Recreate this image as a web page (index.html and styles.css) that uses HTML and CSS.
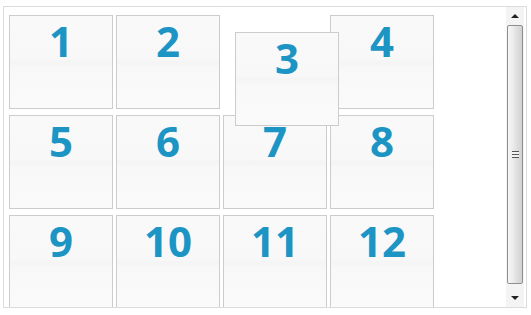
FILE: index.html
```html
<!DOCTYPE html>
<html>
<head>
<meta charset="utf-8">
<link rel="stylesheet" href="styles.css">
</head>
<body>
<div class="frame">
  <div class="content">
    <ul class="sortable">
      <li class="tile">1</li>
      <li class="tile">2</li>
      <li class="placeholder"></li>
      <li class="tile">4</li>
      <li class="tile">5</li>
      <li class="tile">6</li>
      <li class="tile">7</li>
      <li class="tile">8</li>
      <li class="tile">9</li>
      <li class="tile">10</li>
      <li class="tile">11</li>
      <li class="tile">12</li>
    </ul>
    <div class="tile dragging">3</div>
  </div>
  <div class="scrollbar">
    <div class="sb-btn"><span class="arrow-up"></span></div>
    <div class="sb-track">
      <div class="sb-thumb"><span class="grip"></span></div>
    </div>
    <div class="sb-btn"><span class="arrow-down"></span></div>
  </div>
</div>
</body>
</html>
```
FILE: styles.css
```css
html, body {
  margin: 0;
  padding: 0;
  background: #fff;
}
.frame {
  margin: 6px 0 0 3px;
  width: 522px;
  height: 300px;
  border: 1px solid #dcdcdc;
  display: flex;
  overflow: hidden;
}
.content {
  flex: 1;
  position: relative;
  overflow: hidden;
  padding: 8px 0 0 5px;
}
.sortable {
  list-style: none;
  margin: 0;
  padding: 0;
  display: grid;
  grid-template-columns: repeat(4, 104px);
  grid-auto-rows: 94px;
  column-gap: 3px;
  row-gap: 6px;
}
.tile {
  box-sizing: border-box;
  width: 104px;
  height: 94px;
  border: 1px solid #cccccc;
  background: linear-gradient(to bottom, #f9f9f9 0%, #f8f8f8 47%, #f4f4f4 50%, #f8f8f8 56%, #fafafa 100%);
  color: #1c94c4;
  font-family: "Open Sans", "DejaVu Sans", sans-serif;
  font-weight: bold;
  font-size: 42px;
  line-height: 46px;
  text-align: center;
  padding-top: 2px;
}
.placeholder {
  width: 104px;
  height: 94px;
}
.dragging {
  position: absolute;
  left: 231px;
  top: 25px;
  z-index: 5;
}
.scrollbar {
  width: 18px;
  margin-right: 2px;
  background: #f4f4f4;
  display: flex;
  flex-direction: column;
}
.sb-btn {
  height: 18px;
  display: flex;
  align-items: center;
  justify-content: center;
}
.arrow-up {
  width: 0;
  height: 0;
  border-left: 4px solid transparent;
  border-right: 4px solid transparent;
  border-bottom: 4px solid #222;
}
.arrow-down {
  width: 0;
  height: 0;
  border-left: 4px solid transparent;
  border-right: 4px solid transparent;
  border-top: 4px solid #222;
}
.sb-track {
  flex: 1;
  padding: 0 1px 5px 1px;
}
.sb-thumb {
  box-sizing: border-box;
  height: 259px;
  width: 16px;
  border: 1px solid #8f8f8f;
  border-radius: 2px;
  background: linear-gradient(to right, #f6f6f6 0%, #eeeeee 30%, #dedede 65%, #d2d2d2 100%);
  display: flex;
  align-items: center;
  justify-content: center;
}
.grip {
  width: 7px;
  height: 7px;
  background: repeating-linear-gradient(to bottom, #555 0, #555 1px, #f2f2f2 1px, #f2f2f2 3px);
}
```
